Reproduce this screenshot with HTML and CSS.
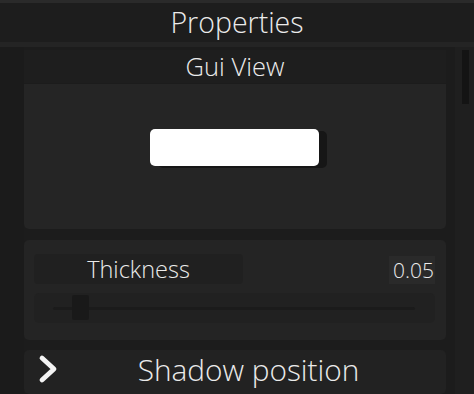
FILE: index.html
```html
<!DOCTYPE html>
<html>
<head>
<meta charset="utf-8">
<link rel="stylesheet" href="styles.css">
</head>
<body>
<div class="app">
  <div class="topline"></div>
  <header class="header">Properties</header>
  <div class="band"></div>
  <div class="main">
    <div class="gutter"></div>
    <div class="content">
      <div class="section-title">Gui View</div>
      <div class="preview">
        <div class="sample"></div>
      </div>
      <div class="card">
        <div class="row">
          <div class="label">Thickness</div>
          <div class="value">0.05</div>
        </div>
        <div class="slider">
          <div class="track"></div>
          <div class="thumb"></div>
        </div>
      </div>
      <div class="collapse">
        <svg class="chev" width="22" height="30" viewBox="0 0 22 30"><path d="M5 4 L17 15 L5 26" fill="none" stroke="#f4f4f4" stroke-width="4.8" stroke-linecap="round" stroke-linejoin="round"/></svg>
        <span class="collapse-text">Shadow position</span>
      </div>
    </div>
    <div class="scrollcol">
      <div class="scrollthumb"></div>
    </div>
  </div>
</div>
</body>
</html>
```
FILE: styles.css
```css
html, body {
  margin: 0;
  padding: 0;
  background: #1c1c1c;
  width: 474px;
  height: 394px;
  overflow: hidden;
  font-family: "Open Sans", "Noto Sans", sans-serif;
  font-weight: 300;
  color: #ebebeb;
}
.app {
  display: flex;
  flex-direction: column;
  height: 394px;
}
.topline {
  height: 3px;
  background: #2a2a2a;
}
.header {
  height: 39px;
  background: #1d1d1d;
  font-size: 28.5px;
  line-height: 39px;
  text-align: center;
}
.band {
  height: 5px;
  background: #242424;
}
.main {
  flex: 1;
  display: flex;
  min-height: 0;
}
.gutter {
  width: 24px;
  background: #1b1b1b;
}
.content {
  width: 422px;
  display: flex;
  flex-direction: column;
  padding-top: 3px;
}
.section-title {
  height: 33px;
  background: #1e1e1e;
  font-size: 25.5px;
  line-height: 33px;
  text-align: center;
}
.preview {
  margin-top: 1px;
  height: 145px;
  background: #252525;
  border-radius: 0 0 5px 5px;
  display: flex;
  justify-content: center;
  padding-top: 45px;
  box-sizing: border-box;
}
.sample {
  margin-right: 1px;
  width: 169px;
  height: 37px;
  background: #ffffff;
  border-radius: 5px;
  box-shadow: 8px 2px 0 #161616;
}
.card {
  margin-top: 11px;
  height: 100px;
  background: #242424;
  border-radius: 5px;
  padding: 14px 11px 0 10px;
  box-sizing: border-box;
  display: flex;
  flex-direction: column;
  gap: 9px;
}
.row {
  display: flex;
  justify-content: space-between;
  align-items: flex-start;
  height: 30px;
}
.label {
  width: 209px;
  height: 30px;
  background: #202020;
  border-radius: 4px;
  font-size: 23.5px;
  line-height: 30px;
  text-align: center;
}
.value {
  margin-top: 2px;
  width: 45px;
  height: 28px;
  background: #2a2a2a;
  font-size: 21px;
  line-height: 28px;
  text-align: right;
  padding-right: 1px;
}
.slider {
  position: relative;
  height: 30px;
  background: #212121;
  border-radius: 5px;
}
.track {
  position: absolute;
  left: 19px;
  right: 20px;
  top: 14px;
  height: 3px;
  background: #1b1b1b;
  border-radius: 2px;
}
.thumb {
  position: absolute;
  left: 38px;
  top: 2px;
  width: 17px;
  height: 25px;
  background: #191919;
  border-radius: 2px;
}
.collapse {
  margin-top: 10px;
  height: 44px;
  background: #222222;
  border-radius: 5px;
  display: flex;
  align-items: center;
  padding-left: 13px;
  box-sizing: border-box;
}
.chev {
  flex: none;
  margin-top: -6px;
}
.collapse-text {
  flex: 1;
  text-align: center;
  font-size: 29.8px;
  margin-left: -8px;
  margin-top: -6px;
}
.scrollcol {
  margin-left: 9px;
  width: 19px;
  background: #1f1f1f;
  position: relative;
}
.scrollthumb {
  position: absolute;
  left: 7px;
  top: 3px;
  width: 7px;
  height: 54px;
  background: #141414;
}
```
